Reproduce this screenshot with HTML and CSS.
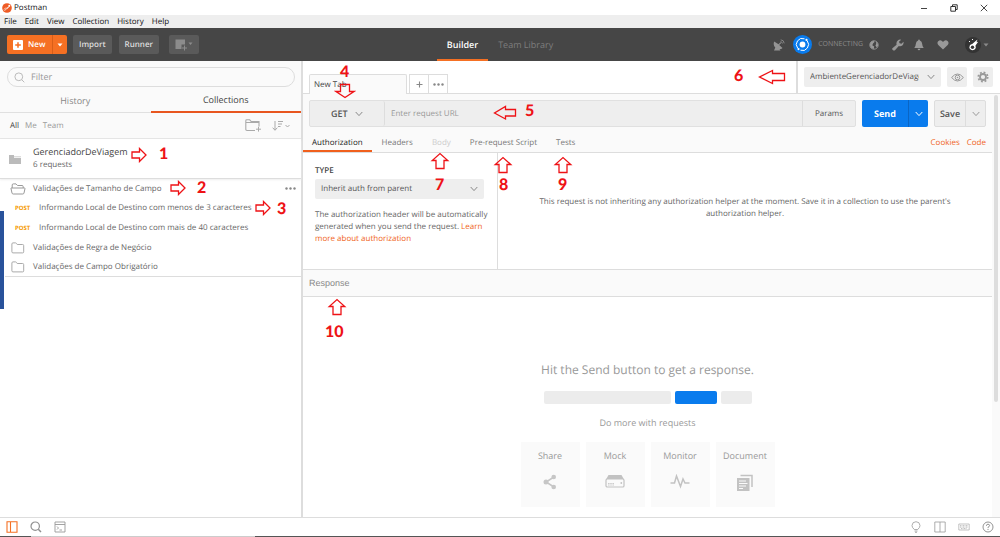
FILE: index.html
```html
<!DOCTYPE html>
<html lang="pt-BR">
<head>
<meta charset="utf-8">
<meta name="viewport" content="width=device-width, initial-scale=1">
<title>Postman</title>
<link rel="stylesheet" href="styles.css">
</head>
<body>
<svg class="defs" aria-hidden="true">
  <symbol id="chev" viewBox="0 0 8 6"><path d="M.7 1 4 4.6 7.3 1" fill="none" stroke="currentColor" stroke-width="1"/></symbol>
  <symbol id="caret" viewBox="0 0 6 4"><path d="M.5.5h5L3 3.5z" fill="currentColor"/></symbol>
  <symbol id="folder" viewBox="0 0 14 12"><path d="M.9 9.8V2Q.9.9 2 .9h2.600q.6 0 1 .7l.6.9H11.600q1.100 0 1.100 1.100v6.200q0 1.100-1.100 1.100H2Q.9 10.900.9 9.800z" fill="none" stroke="#aaa" stroke-width="1"/></symbol>
  <symbol id="arrow-right" viewBox="0 0 18 16"><path d="M2 5h7.500V1.500L16 8l-6.500 6.500V11H2z" fill="#fff" stroke="#ee1216" stroke-width="1.300"/></symbol>
  <symbol id="arrow-left" viewBox="0 0 24 16"><path d="M22.500 4.500h-10V1.500L1.500 8l11 6v-3h10z" fill="none" stroke="#ee1216" stroke-width="1.300"/></symbol>
  <symbol id="arrow-up" viewBox="0 0 20 18"><path d="M6 16.500V8.500H2.200L10 1.500l7.800 7H14v8z" fill="none" stroke="#ee1216" stroke-width="1.300"/></symbol>
  <symbol id="arrow-down" viewBox="0 0 22 16"><path d="M6.500 1.500v7H2L11 14.500l9-6h-4.500v-7z" fill="none" stroke="#ee1216" stroke-width="1.300"/></symbol>
</svg>

<div class="app">
  <div class="titlebar">
    <svg class="logo" viewBox="0 0 10 10"><circle cx="5" cy="5" r="4.800" fill="#ef5b25"/><path d="m2.500 7.800 4-4M2 6.500l2-2M5 5.800 7.500 3" stroke="#fff" stroke-width=".8"/><circle cx="7.300" cy="2.700" r="1" fill="#fff"/></svg>
    <span class="app-name">Postman</span>
    <div class="window-controls">
      <button aria-label="Minimize"><svg width="8" height="8" viewBox="0 0 8 8"><path d="M1 4.500h6" stroke="#444"/></svg></button>
      <button aria-label="Restore"><svg width="8" height="8" viewBox="0 0 8 8"><path d="M.8 2.500h4.700v4.700H.8zM2.500 2.500V.8h4.700v4.700H5.500" fill="none" stroke="#333"/></svg></button>
      <button aria-label="Close"><svg width="8" height="8" viewBox="0 0 8 8"><path d="m.8.8 6.400 6.400M7.200.8.8 7.200" stroke="#333" stroke-width=".9"/></svg></button>
    </div>
  </div>

  <nav class="menubar" aria-label="Menu">
    <button>File</button><button>Edit</button><button>View</button><button>Collection</button><button>History</button><button>Help</button>
  </nav>

  <header class="toolbar">
    <div class="actions">
      <div class="new-group">
        <button class="new-btn"><svg width="10" height="10" viewBox="0 0 10 10"><rect width="10" height="10" rx="1" fill="#fff"/><path d="M5 2.200v5.600M2.200 5h5.600" stroke="#f57023" stroke-width="1.500"/></svg>New</button>
        <button class="new-more" aria-label="New options"><svg width="6" height="4"><use href="#caret"/></svg></button>
      </div>
      <button class="dark-btn import">Import</button>
      <button class="dark-btn">Runner</button>
      <button class="dark-btn window-btn" aria-label="New window"><svg width="18" height="12" viewBox="0 0 18 12"><path d="M.5.500h9.500v5H6.500v4.500h-6z" fill="#8c8c8c"/><path d="M9.500 6.500v5M7 9h5" stroke="#8c8c8c"/><path d="M13.500 3.500h4L15.500 6z" fill="#8c8c8c"/></svg></button>
    </div>
    <nav class="modes" aria-label="Workspace">
      <button class="mode active">Builder</button>
      <button class="mode">Team Library</button>
    </nav>
    <div class="status">
      <svg class="sat" width="12" height="12" viewBox="0 0 12 12"><path d="M1.200 2.500Q-.2 6 2.300 8.600L1 11.500h6.500L6.500 10.300Q8.500 10.200 9.500 9L6.200 6l2-2-.7-.7-2 2z" fill="#949494"/><path d="M7.500 2.600q1.700.1 1.900 1.900M7.700.8q3.200.2 3.500 3.500" fill="none" stroke="#949494" stroke-width=".8"/></svg>
      <svg class="sync" width="19" height="19" viewBox="0 0 19 19"><circle cx="9.500" cy="9.500" r="9.500" fill="#097bed"/><circle cx="9.500" cy="9.500" r="2.900" fill="#fff"/><path d="M4.700 13.200A6 6 0 0 1 11.500 3.800M14.200 5.800A6 6 0 0 1 7.500 15.200" fill="none" stroke="#fff" stroke-width="1"/><circle cx="13.500" cy="4.900" r="1.100" fill="#fff"/><circle cx="5.500" cy="14.100" r="1.100" fill="#fff"/></svg>
      <span class="connecting">CONNECTING</span>
      <svg class="globe" width="10" height="10" viewBox="0 0 10 10"><circle cx="5" cy="5" r="4.200" fill="#464646" stroke="#999" stroke-width=".9"/><path d="M.9 4Q1.500 1.300 4.500.8L5.600 2 4.200 3.200 3.300 5.200l1.900 1.300-.4 2.500Q1 8.800.9 4zM7 1.500Q9.500 3 9.100 6L7.600 7.200 6.400 5.600 7.200 4z" fill="#999"/></svg>
      <svg class="wrench" width="12" height="12" viewBox="0 0 12 12"><path d="M.4 9.200 4.600 5.800Q3.900 3 5.800 1.400 7.300.2 9.200.8L7 2.700l.6 1.600 1.900.5 2-2q.4 2.300-1.200 3.700Q8.800 7.700 6.800 7.100L3.200 11Q2 12 .8 11-.2 10.200.4 9.200z" fill="#999"/></svg>
      <svg class="bell" width="10" height="12" viewBox="0 0 10 12"><path d="M5 .5q.8 0 .9.900Q8 2 8.200 5q.1 2.700 1.500 4H.3Q1.700 7.700 1.800 5 2 2 4.100 1.400 4.200.5 5 .5zM3.600 9.700h2.800Q6.200 11.200 5 11.200T3.600 9.700z" fill="#999"/></svg>
      <svg class="heart" width="12" height="10" viewBox="0 0 12 10"><path d="M6 9.600 1.300 5Q-.3 3 1.200 1.300 3-.4 5 1l1 1 1-1q2-1.400 3.800.3Q12.300 3 10.700 5z" fill="#999"/></svg>
      <svg class="avatar" width="16" height="16" viewBox="0 0 16 16"><circle cx="8" cy="8" r="8" fill="#333"/><path d="m12.500 2.500-1 2.700 1.700-.5-2.700 3.800q1 2.300-.9 4Q7.600 14 5.600 12.600q-2-1.800-.8-4Q5.600 7.400 7.200 7z" fill="#fff"/><circle cx="7.500" cy="10.200" r="1.700" fill="#333"/><path d="M4 4.500h1M7 2.500h1" stroke="#fff"/></svg>
      <svg class="user-caret" width="6" height="4"><use href="#caret"/></svg>
    </div>
  </header>

  <div class="workspace">
    <aside class="sidebar">
      <div class="side-top">
        <label class="filter"><svg width="11" height="11" viewBox="0 0 11 11"><circle cx="4.800" cy="4.800" r="3.900" fill="none" stroke="#bbb"/><path d="m7.600 7.600 2.700 2.700" stroke="#bbb"/></svg><input type="text" placeholder="Filter" aria-label="Filter"></label>
        <nav class="side-tabs"><button>History</button><button class="active">Collections</button></nav>
        <div class="scope">
          <button class="active">All</button><button>Me</button><button>Team</button>
          <div class="scope-tools">
            <button aria-label="New collection"><svg width="17" height="13" viewBox="0 0 17 13"><path d="M10 11.500H2Q.8 11.500.8 10.300V1.700Q.8.800 1.700.8h3l1.500 1.700H14v5M1 3.500h12.500" fill="none" stroke="#aaa" stroke-width="1.100"/><path d="M13.500 7.800v4.800M11 10.200h5" stroke="#aaa"/></svg></button>
            <button aria-label="Sort"><svg width="18" height="12" viewBox="0 0 18 12"><path d="M3 1v9M.7 7.700 3 10.300l2.300-2.600M6 1.500h5M6 4h4M6 6.500h2.500M13.500 5l2 2 2-2" fill="none" stroke="#aaa"/></svg></button>
          </div>
        </div>
      </div>
      <div class="collection">
        <svg width="12" height="10" viewBox="0 0 12 10"><path d="M0 1h5v1.500h7V10H0z" fill="#bbb"/><path d="M5 3.500h7" stroke="#fff" stroke-width=".8"/></svg>
        <div><div class="col-name">GerenciadorDeViagem</div><div class="col-count">6 requests</div></div>
      </div>
      <ul class="tree">
        <li class="folder-row"><svg class="open" width="16" height="12" viewBox="0 0 16 12"><path d="M2.200 5V2q0-1.100 1.100-1.100H6l1.500 1.600h4.600q1.100 0 1.100 1.100V5M1 5h13.500q.6 0 .5.600l-1 4.400q-.2 1-1.200 1H3.200q-1 0-1.200-1L1 5.600Q.9 5 1 5z" fill="none" stroke="#999"/></svg><span>Validações de Tamanho de Campo</span><button class="more" aria-label="More"><svg width="11" height="3" viewBox="0 0 11 3"><circle cx="1.500" cy="1.500" r="1.200" fill="#888"/><circle cx="5.500" cy="1.500" r="1.200" fill="#888"/><circle cx="9.500" cy="1.500" r="1.200" fill="#888"/></svg></button></li>
        <li class="request-row"><b>POST</b><span>Informando Local de Destino com menos de 3 caracteres</span></li>
        <li class="request-row"><b>POST</b><span>Informando Local de Destino com mais de 40 caracteres</span></li>
        <li class="folder-row"><svg width="14" height="12"><use href="#folder"/></svg><span>Validações de Regra de Negócio</span></li>
        <li class="folder-row"><svg width="14" height="12"><use href="#folder"/></svg><span>Validações de Campo Obrigatório</span></li>
      </ul>
      <div class="edge-strip"></div>
    </aside>

    <main class="main">
      <div class="tab-row">
        <div class="tabs">
          <button class="req-tab">New Tab</button>
          <div class="tab-tools">
            <button aria-label="Add tab"><svg width="7" height="7" viewBox="0 0 7 7"><path d="M3.500.5v6M.5 3.500h6" stroke="#888" stroke-width="1.100"/></svg></button><button aria-label="Tab options"><svg width="11" height="3" viewBox="0 0 11 3"><circle cx="1.500" cy="1.500" r="1.200" fill="#888"/><circle cx="5.500" cy="1.500" r="1.200" fill="#888"/><circle cx="9.500" cy="1.500" r="1.200" fill="#888"/></svg></button>
          </div>
        </div>
        <div class="env">
          <div class="picker env-picker"><select aria-label="Environment"><option>AmbienteGerenciadorDeViagem</option></select><svg width="8" height="6"><use href="#chev"/></svg></div>
          <button aria-label="Environment quick look"><svg width="13" height="9" viewBox="0 0 13 9"><path d="M.6 4.500Q6.500-2.500 12.400 4.500 6.500 11.500.6 4.500z" fill="none" stroke="#999"/><circle cx="6.500" cy="4.500" r="2.300" fill="none" stroke="#999"/><circle cx="6.500" cy="4.500" r=".8" fill="#999"/></svg></button>
          <button aria-label="Settings"><svg width="12" height="12" viewBox="0 0 12 12"><circle cx="6" cy="6" r="4.700" fill="none" stroke="#999" stroke-width="1.700" stroke-dasharray="1.850 1.840"/><circle cx="6" cy="6" r="3" fill="none" stroke="#999" stroke-width="1.800"/></svg></button>
        </div>
      </div>

      <div class="pane">
        <div class="builder">
          <div class="url-row">
            <div class="url-bar">
              <div class="picker method"><select aria-label="Method"><option>GET</option></select><svg width="8" height="6"><use href="#chev"/></svg></div>
              <input type="text" placeholder="Enter request URL" aria-label="Request URL">
              <button class="params">Params</button>
            </div>
            <div class="send"><button>Send</button><button class="drop" aria-label="Send options"><svg width="8" height="6"><use href="#chev"/></svg></button></div>
            <div class="save"><button>Save</button><button class="drop" aria-label="Save options"><svg width="8" height="6"><use href="#chev"/></svg></button></div>
          </div>
          <nav class="req-tabs">
            <button class="active">Authorization</button><button>Headers</button><button disabled>Body</button><button>Pre-request Script</button><button>Tests</button>
            <div class="req-links"><a href="#cookies">Cookies</a><a href="#code">Code</a></div>
          </nav>
          <section class="auth">
            <div class="auth-left">
              <label class="type-label" for="auth-type">TYPE</label>
              <div class="picker type-picker"><select id="auth-type"><option>Inherit auth from parent</option></select><svg width="8" height="6"><use href="#chev"/></svg></div>
              <p>The authorization header will be automatically generated when you send the request. <a href="#learn">Learn more about authorization</a></p>
            </div>
            <p class="auth-note">This request is not inheriting any authorization helper at the moment. Save it in a collection to use the parent's authorization helper.</p>
          </section>
          <h2 class="response-head">Response</h2>
          <section class="empty">
            <p class="hint">Hit the Send button to get a response.</p>
            <div class="bars"><span class="bar-url"></span><span class="bar-send"></span><span class="bar-save"></span></div>
            <p class="more-title">Do more with requests</p>
            <div class="cards">
              <button>Share<svg width="14" height="16" viewBox="0 0 14 16"><path d="M11 3 3 8l8 5" fill="none" stroke="#c6c6c6" stroke-width="1.500"/><g fill="#c6c6c6"><circle cx="10.700" cy="3" r="2.300"/><circle cx="3" cy="8" r="2.500"/><circle cx="10.700" cy="13" r="2.300"/></g></svg></button>
              <button>Mock<svg width="20" height="16" viewBox="0 0 20 16"><path d="M3.500 1h13L19 5.500H1z" fill="#c2c2c2"/><rect x="1" y="5" width="18" height="8" rx="1.300" fill="#fafafa" stroke="#c2c2c2" stroke-width="1.200"/><path d="M3 9.500h6M3 11h6" stroke="#ccc" stroke-width="1.200" stroke-dasharray="1.200 .4"/><circle cx="16.300" cy="9" r=".9" fill="#c2c2c2"/></svg></button>
              <button>Monitor<svg width="20" height="16" viewBox="0 0 20 16"><path d="M.5 9h4L6.500 2l4 10.500L13 5l2 4h4.500" fill="none" stroke="#c2c2c2" stroke-width="1.500"/></svg></button>
              <button>Document<svg width="18" height="18" viewBox="0 0 18 18"><path d="M4.500 1.500H16v11.500" fill="none" stroke="#c2c2c2" stroke-width="1.500"/><rect x="1" y="4" width="12.500" height="13" fill="#c2c2c2"/><path d="M3 7h7M3 9.500h8.500M3 12h7M3 14.500h4" stroke="#fafafa" stroke-width="1.100"/></svg></button>
            </div>
          </section>
        </div>
        <div class="scroll-track"><div class="scroll-thumb"></div></div>
      </div>
    </main>
  </div>

  <footer class="statusbar">
    <div class="foot-left">
      <button aria-label="Toggle sidebar"><svg width="12" height="12" viewBox="0 0 12 12"><path d="M1 .8h10v10.400H1zM4.500.8v10.400" fill="none" stroke="#f47023" stroke-width="1.100"/></svg></button>
      <button aria-label="Find"><svg width="12" height="12" viewBox="0 0 12 12"><circle cx="5.200" cy="5.200" r="4.200" fill="none" stroke="#909090" stroke-width="1.200"/><path d="m8.300 8.300 2.700 2.700" stroke="#909090" stroke-width="1.500"/></svg></button>
      <button aria-label="Console"><svg width="12" height="12" viewBox="0 0 12 12"><path d="M1 1h10v10H1zM1 3.500h10M3 5.500l1.500 1.500L3 8.500M5.500 9H8" fill="none" stroke="#999" stroke-width=".9"/></svg></button>
    </div>
    <div class="foot-right">
      <button aria-label="Tips"><svg width="12" height="12" viewBox="0 0 12 12"><path d="M4.300 8.500Q2 6.500 2 4.500 2.200.8 6 .7q3.800.1 4 3.800 0 2-2.300 4zM4.500 10h3M5 11.300h2" fill="none" stroke="#999" stroke-width=".8"/></svg></button>
      <button aria-label="Two panes"><svg width="12" height="12" viewBox="0 0 12 12"><path d="M.8 1h10.400v10H.8zM6 1v10" fill="none" stroke="#999" stroke-width=".8"/></svg></button>
      <button aria-label="Shortcuts"><svg width="12" height="12" viewBox="0 0 12 12"><path d="M.8 3h10.400v6H.8z" fill="none" stroke="#aaa" stroke-width=".7"/><path d="M2 4.700h8M2 6.100h8M3 7.600h6" stroke="#aaa" stroke-width=".8" stroke-dasharray="1 .5"/></svg></button>
      <button aria-label="Help"><svg width="12" height="12" viewBox="0 0 12 12"><circle cx="6" cy="6" r="5" fill="none" stroke="#888" stroke-width=".9"/><path d="M4.400 4.800Q4.500 3.200 6 3.200t1.600 1.400Q7.600 5.500 6 6.300v.8M6 8v1" fill="none" stroke="#888" stroke-width=".9"/></svg></button>
    </div>
  </footer>
  <div class="taskbar-edge"></div>

  <div class="notes">
    <svg class="a1" width="18" height="16"><use href="#arrow-right"/></svg><span class="n1">1</span>
    <svg class="a2" width="20" height="16"><use href="#arrow-right"/></svg><span class="n2">2</span>
    <svg class="a3" width="18" height="16"><use href="#arrow-right"/></svg><span class="n3">3</span>
    <svg class="a4" width="22" height="16"><use href="#arrow-down"/></svg><span class="n4">4</span>
    <svg class="a5" width="24" height="16"><use href="#arrow-left"/></svg><span class="n5">5</span>
    <svg class="a6" width="28" height="16" viewBox="0 0 28 16"><path d="M26.500 4.500h-12v-3L1.500 8l13 6.500v-3h12z" fill="none" stroke="#ee1216" stroke-width="1.300"/></svg><span class="n6">6</span>
    <svg class="a7" width="20" height="18"><use href="#arrow-up"/></svg><span class="n7">7</span>
    <svg class="a8" width="20" height="18"><use href="#arrow-up"/></svg><span class="n8">8</span>
    <svg class="a9" width="20" height="18"><use href="#arrow-up"/></svg><span class="n9">9</span>
    <svg class="a10" width="20" height="18"><use href="#arrow-up"/></svg><span class="n10">10</span>
  </div>
</div>
</body>
</html>
```
FILE: styles.css
```css
* { box-sizing: border-box; }
body { margin: 0; font-family: "Open Sans", "Noto Sans", sans-serif; font-size: 8px; line-height: 12px; color: #666; background: #fff; text-rendering: geometricPrecision; }
button, input, select { font: inherit; color: inherit; border: 0; padding: 0; margin: 0; background: none; border-radius: 0; text-rendering: inherit; }
input { outline: 0; min-width: 0; }
select { appearance: none; text-overflow: clip; }
p, h2, ul { margin: 0; padding: 0; }
svg { display: block; flex: none; }
.defs { position: absolute; width: 0; height: 0; }
.app { position: relative; display: flex; flex-direction: column; min-height: 100vh; }

.titlebar { display: flex; align-items: center; height: 15px; padding: 0 12px 0 2px; color: #111; }
.logo { width: 10px; height: 10px; }
.app-name { margin-left: 2px; }
.window-controls { display: flex; gap: 22px; margin-left: auto; }
.menubar { display: flex; gap: 8px; height: 13px; padding: 0 4px; background: #eee; color: #111; }

.toolbar { display: grid; grid-template-columns: 1fr auto 1fr; align-items: center; height: 33px; background: #464646; color: #ddd; }
.actions { display: flex; align-items: center; padding-left: 7px; font-weight: 600; }
.actions button { height: 19px; }
.new-group { display: flex; background: #f57023; border-radius: 2px; color: #fff; margin-right: 6px; }
.new-btn { display: flex; align-items: center; gap: 5px; width: 45px; padding-left: 6px; }
.new-more { display: grid; place-items: center; width: 15px; border-left: 1px solid #d85f19; }
.dark-btn { background: #5a5a5a; border-radius: 2px; padding: 0 6px; margin-right: 7px; }
.window-btn { margin-left: 3px; }
.modes { display: flex; align-self: stretch; font-size: 9px; }
.mode { padding: 2px 10px 0; color: #7d7d7d; border-bottom: 2px solid transparent; }
.mode.active { color: #fff; font-weight: 600; border-color: #f57023; }
.status { display: flex; align-items: center; justify-content: flex-end; padding-right: 11px; color: #8a8a8a; }
.sync { margin-left: 8px; }
.connecting { margin: 0 6px; font-size: 7px; }
.wrench { margin-left: 13px; }
.bell { margin-left: 10px; }
.heart { margin-left: 13px; }
.avatar { margin-left: 16px; }
.user-caret { margin-left: 2px; }

.workspace { display: flex; flex: 1; }
.sidebar { position: relative; flex: 0 0 303px; border-right: 2px solid #ddd; }
.side-top { background: #fafafa; border-bottom: 1px solid #e5e5e5; padding-top: 6px; }
.filter { display: flex; align-items: center; gap: 6px; height: 20px; margin: 0 6px 0 7px; padding-left: 6px; border: 1px solid #ddd; border-radius: 10px; font-size: 9px; }
.filter input { flex: 1; }
input::placeholder { color: #999; opacity: 1; }
.side-tabs { display: flex; height: 26px; font-size: 9px; }
.side-tabs button { flex: 1; color: #888; padding-top: 2px; border-bottom: 1px solid #e0e0e0; }
.side-tabs .active { color: #444; border-bottom: 2px solid #e8561f; }
.scope { display: flex; align-items: center; gap: 6px; height: 25px; padding: 0 11px 0 10px; }
.scope button { color: #999; }
.scope .active { color: #444; }
.scope-tools { display: flex; align-items: center; gap: 10px; margin-left: auto; }
.collection { display: flex; align-items: center; gap: 12px; height: 40px; padding-left: 9px; border-bottom: 1px solid #ddd; box-shadow: 0 1px 2px #eee; }
.col-name { font-size: 9px; color: #444; }
.col-count { margin-top: 1px; }
.tree { list-style: none; margin-left: 5px; border-bottom: 1px solid #ddd; }
.tree li { display: flex; align-items: center; white-space: nowrap; }
.folder-row { height: 19px; padding-left: 6px; gap: 8px; }
.folder-row .open { margin: 0 -1px; }
.more { margin: 0 5px 0 auto; }
.request-row { height: 20px; padding-left: 10px; gap: 8px; }
.request-row b { font-size: 6px; width: 16px; color: #f59a00; }
.edge-strip { position: absolute; left: 0; top: 150px; width: 4px; height: 98px; background: #29529b; }

.main { flex: 1; min-width: 0; display: flex; flex-direction: column; }
.tab-row { display: flex; height: 33px; }
.tabs { flex: 1; display: flex; align-items: flex-end; padding-left: 6px; border-bottom: 1px solid #ddd; }
.req-tab { width: 98px; height: 20px; margin-bottom: -1px; padding: 0 4px; text-align: left; color: #444; background: #fafafa; border: 1px solid #ddd; border-bottom: 0; border-radius: 2px 2px 0 0; }
.tab-tools { display: flex; margin-left: 2px; }
.tab-tools button { display: grid; place-items: center; width: 20px; height: 19px; border: 1px solid #ddd; border-bottom: 0; }
.tab-tools button + button { border-left: 0; width: 19px; }
.env { display: flex; align-items: center; gap: 6px; padding: 0 7px 0 6px; border-left: 2px solid #ddd; border-bottom: 1px solid #ddd; }
.env button { display: grid; place-items: center; width: 20px; height: 20px; background: #eee; border-radius: 2px; }
.picker { display: grid; align-items: center; background: #eee; border-radius: 2px; color: #555; }
.picker > * { grid-area: 1 / 1; }
.picker svg { justify-self: end; margin-right: 6px; pointer-events: none; color: #888; }
.picker select { width: 100%; height: 20px; padding: 0 22px 0 6px; overflow: hidden; }
.env-picker { width: 137px; }

.pane { flex: 1; display: flex; background: #fafafa; }
.builder { flex: 1; min-width: 0; display: flex; flex-direction: column; background: #fff; }
.url-row { display: flex; gap: 6px; padding: 6px; background: #fafafa; }
.url-bar { flex: 1; display: flex; background: #eee; border: 1px solid #e0e0e0; border-radius: 2px; height: 27px; }
.url-bar input { flex: 1; padding: 0 6px; }
.method { width: 75px; border-right: 1px solid #ddd; }
.method select { font-size: 9px; font-weight: 600; height: 25px; padding: 0 0 0 21px; }
.method svg { margin-right: 21px; }
.params { width: 53px; border-left: 1px solid #ddd; color: #555; }
.send, .save { display: flex; height: 27px; border-radius: 2px; }
.send { width: 66px; background: #097bed; color: #fff; font-size: 9px; font-weight: 700; }
.save { width: 52px; background: #eee; border: 1px solid #ddd; font-size: 9px; color: #555; font-weight: 600; }
.send button, .save button { flex: 1; }
.send .drop, .save .drop { display: grid; place-items: center; flex: 0 0 20px; border-left: 1px solid #0a65c4; }
.save .drop { border-color: #ddd; color: #999; }
.req-tabs { display: flex; height: 20px; background: #fafafa; border-bottom: 1px solid #ddd; }
.req-tabs button { padding: 0 9px 0 10px; color: #777; }
.req-tabs .active { padding-left: 9px; color: #222; box-shadow: inset 0 -2px #f0601d; }
.req-tabs button:disabled { color: #ccc; }
.req-links { display: flex; align-items: center; gap: 7px; margin-left: auto; padding-right: 6px; }
a { color: #f0641a; text-decoration: none; }
.auth { display: flex; min-height: 116px; }
.auth-left { flex: 0 0 195px; padding: 12px 8px 12px 12px; border-right: 1px solid #ddd; }
.type-label { display: block; color: #444; font-weight: 600; margin-bottom: 2px; }
.type-picker { margin: 0 5px 10px 0; }
.auth-note { flex: 1; padding: 43px 40px 0; text-align: center; }
.response-head { padding: 7px 6px; font-family: "Liberation Sans", Arial, sans-serif; font-size: 9px; font-weight: 400; color: #888; background: #fafafa; border-top: 1px solid #ddd; border-bottom: 1px solid #ddd; }
.empty { display: flex; flex-direction: column; align-items: center; padding-top: 65px; color: #999; }
.hint { font-size: 12px; line-height: 16px; }
.bars { display: flex; gap: 4px; margin: 13px 0; }
.bars span { height: 13px; background: #ececec; border-radius: 2px; }
.bars .bar-url { width: 127px; }
.bars .bar-send { width: 42px; background: #097bed; }
.bars .bar-save { width: 31px; }
.more-title { font-size: 9px; }
.cards { display: flex; gap: 6px; margin-top: 13px; }
.cards button { display: flex; flex-direction: column; align-items: center; gap: 12px; width: 59px; height: 65px; padding-top: 8px; background: #fafafa; font-size: 9px; }
.scroll-track { width: 8px; padding: 1px 2px; }
.scroll-thumb { width: 4px; height: 307px; background: #ddd; border-radius: 2px; }

.statusbar { display: flex; justify-content: space-between; align-items: center; height: 19px; padding: 0 6px; border-top: 1px solid #ddd; }
.foot-left, .foot-right { display: flex; gap: 12px; }
.taskbar-edge { height: 1px; background: linear-gradient(to right, #555 31px, #ccc 31px, #ccc 255px, #555 255px); }

.notes { position: absolute; inset: 0; pointer-events: none; font-family: Lato, "Open Sans", sans-serif; font-size: 16px; line-height: 16px; font-weight: 900; color: #ee1216; }
.notes > * { position: absolute; }
.a1 { left: 130px; top: 147px; } .n1 { left: 159px; top: 146px; }
.a2 { left: 168px; top: 180px; } .n2 { left: 197px; top: 180px; }
.a3 { left: 254px; top: 200px; } .n3 { left: 277px; top: 201px; }
.a4 { left: 334px; top: 83px; } .n4 { left: 340px; top: 64px; }
.a5 { left: 493px; top: 105px; } .n5 { left: 525px; top: 103px; }
.a6 { left: 758px; top: 69px; } .n6 { left: 734px; top: 68px; }
.a7 { left: 430px; top: 152px; } .n7 { left: 435px; top: 177px; }
.a8 { left: 493px; top: 156px; } .n8 { left: 499px; top: 177px; }
.a9 { left: 553px; top: 156px; } .n9 { left: 558px; top: 177px; }
.a10 { left: 327px; top: 298px; } .n10 { left: 325px; top: 324px; }
```
